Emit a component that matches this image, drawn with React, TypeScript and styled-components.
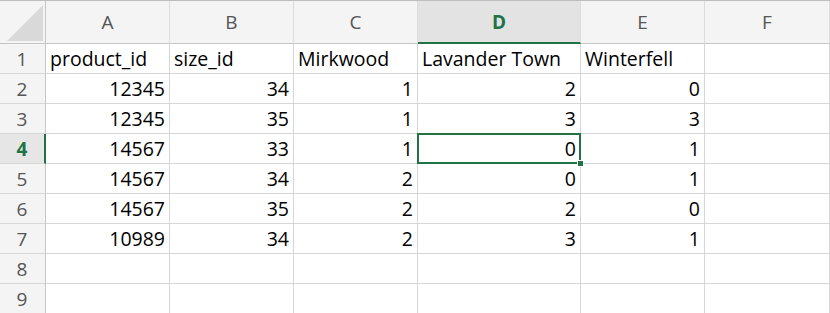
import React from "react";
import styled, { createGlobalStyle, css } from "styled-components";

const GlobalStyle = createGlobalStyle`
    html, body {
        margin: 0;
        padding: 0;
        background: #ffffff;
    }
    body {
        font-family: "Open Sans", "Liberation Sans", sans-serif;
    }
`;

const green = "#217346";

const Sheet = styled.div`
    display: grid;
    grid-template-columns: 46px 124px 124px 124px 163px 124px 125px;
    grid-template-rows: 43px repeat(9, 30px);
    width: 830px;
    border-top: 1px solid #bdbdbd;
    box-sizing: border-box;
    overflow: hidden;
`;

const Corner = styled.div`
    background: #f4f4f4;
    border-right: 1px solid #c6c6c6;
    border-bottom: 1px solid #c6c6c6;
    display: flex;
    align-items: flex-end;
    justify-content: flex-end;
    padding: 0 2px 2px 0;
    box-sizing: border-box;
`;

const ColHead = styled.div<{ $active?: boolean }>`
    background: ${p => (p.$active ? "#e3e3e3" : "#f4f4f4")};
    border-right: 1px solid #dcdcdc;
    border-bottom: ${p => (p.$active ? `2px solid ${green}` : "1px solid #c6c6c6")};
    display: flex;
    align-items: center;
    justify-content: center;
    padding-bottom: ${p => (p.$active ? "0" : "1px")};
    font-size: 19px;
    color: ${p => (p.$active ? green : "#555555")};
    font-weight: ${p => (p.$active ? 700 : 500)};
    box-sizing: border-box;
`;

const RowHead = styled.div<{ $active?: boolean }>`
    background: ${p => (p.$active ? "#e6e6e6" : "#f4f4f4")};
    border-right: ${p => (p.$active ? `2px solid ${green}` : "1px solid #c6c6c6")};
    border-bottom: 1px solid #d6d6d6;
    display: flex;
    align-items: center;
    justify-content: center;
    padding-right: ${p => (p.$active ? "0" : "1px")};
    font-size: 19px;
    color: ${p => (p.$active ? green : "#555555")};
    font-weight: ${p => (p.$active ? 700 : 500)};
    box-sizing: border-box;
`;

const Cell = styled.div<{ $num?: boolean; $selected?: boolean }>`
    position: relative;
    border-right: 1px solid #d6d6d6;
    border-bottom: 1px solid #d6d6d6;
    padding: 0 4px;
    font-size: 19.5px;
    font-weight: 500;
    line-height: 29px;
    color: #000;
    text-align: ${p => (p.$num ? "right" : "left")};
    white-space: nowrap;
    box-sizing: border-box;

    ${p =>
        p.$selected &&
        css`
            &::after {
                content: "";
                position: absolute;
                top: -1px;
                left: -1px;
                right: -1px;
                bottom: -1px;
                border: 2px solid ${green};
                pointer-events: none;
            }
        `}
`;

const FillHandle = styled.span`
    position: absolute;
    right: -4px;
    bottom: -4px;
    width: 5px;
    height: 5px;
    background: ${green};
    border: 1px solid #ffffff;
    z-index: 2;
`;

const columns = ["A", "B", "C", "D", "E", "F"];
const activeCol = 3;
const activeRow = 4;

const rows: (string | number | null)[][] = [
    ["product_id", "size_id", "Mirkwood", "Lavander Town", "Winterfell", null],
    [12345, 34, 1, 2, 0, null],
    [12345, 35, 1, 3, 3, null],
    [14567, 33, 1, 0, 1, null],
    [14567, 34, 2, 0, 1, null],
    [14567, 35, 2, 2, 0, null],
    [10989, 34, 2, 3, 1, null],
    [null, null, null, null, null, null],
    [null, null, null, null, null, null],
];

export default function App() {
    return (
        <>
            <GlobalStyle />
            <Sheet>
                <Corner>
                    <svg width="36" height="36" viewBox="0 0 36 36">
                        <polygon points="0,36 36,0 36,36" fill="#d9d9d9" />
                    </svg>
                </Corner>
                {columns.map((c, i) => (
                    <ColHead key={c} $active={i === activeCol}>
                        {c}
                    </ColHead>
                ))}
                {rows.map((row, r) => (
                    <React.Fragment key={r}>
                        <RowHead $active={r + 1 === activeRow}>{r + 1}</RowHead>
                        {row.map((v, c) => {
                            const selected = r + 1 === activeRow && c === activeCol;
                            return (
                                <Cell key={c} $num={typeof v === "number"} $selected={selected}>
                                    {v}
                                    {selected && <FillHandle />}
                                </Cell>
                            );
                        })}
                    </React.Fragment>
                ))}
            </Sheet>
        </>
    );
}
